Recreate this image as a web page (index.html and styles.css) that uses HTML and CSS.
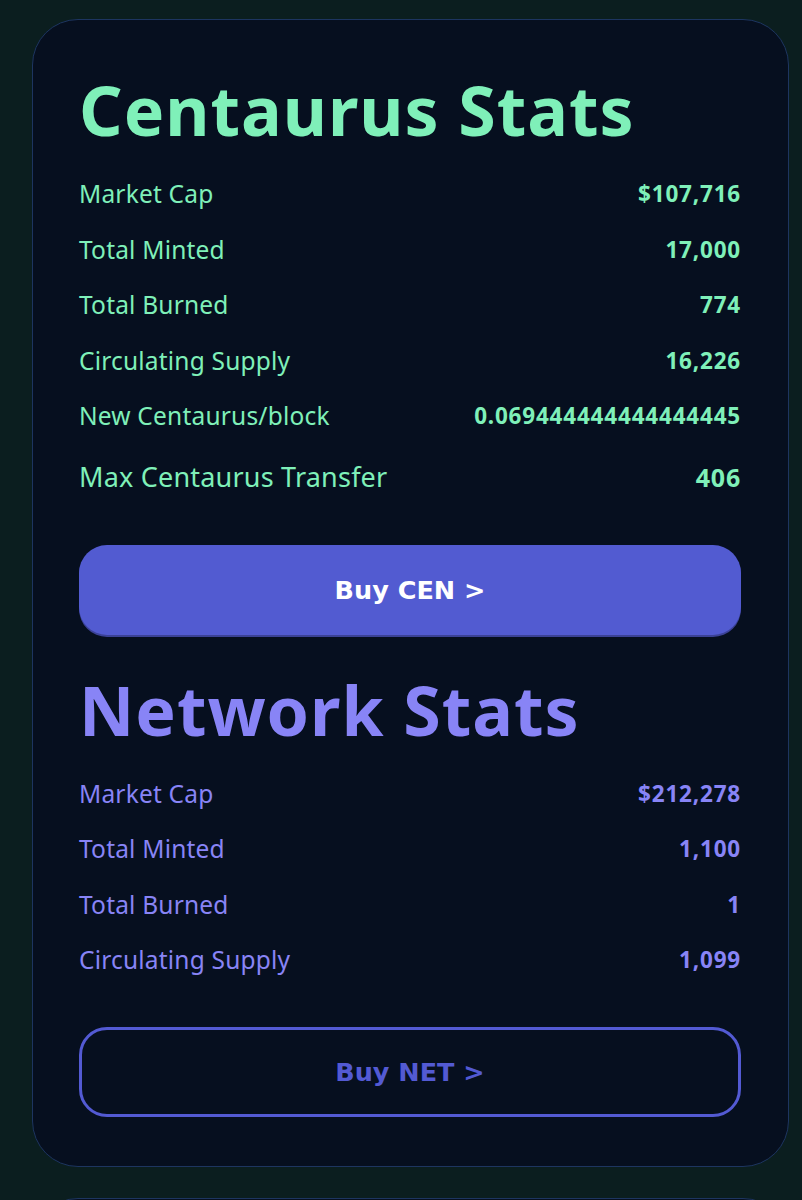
FILE: index.html
```html
<!DOCTYPE html>
<html lang="en">
<head>
<meta charset="utf-8">
<title>Centaurus Stats</title>
<link rel="stylesheet" href="styles.css">
</head>
<body>
<main class="page">
  <section class="card">
    <h2 class="title title-green">Centaurus Stats</h2>
    <div class="stats green">
      <div class="row"><span class="label">Market Cap</span><span class="value">$107,716</span></div>
      <div class="row"><span class="label">Total Minted</span><span class="value">17,000</span></div>
      <div class="row"><span class="label">Total Burned</span><span class="value">774</span></div>
      <div class="row"><span class="label">Circulating Supply</span><span class="value">16,226</span></div>
      <div class="row"><span class="label">New Centaurus/block</span><span class="value">0.069444444444444445</span></div>
      <div class="row row-big"><span class="label">Max Centaurus Transfer</span><span class="value">406</span></div>
    </div>
    <a class="btn btn-solid" href="#">Buy CEN &gt;</a>

    <h2 class="title title-purple">Network Stats</h2>
    <div class="stats purple">
      <div class="row"><span class="label">Market Cap</span><span class="value">$212,278</span></div>
      <div class="row"><span class="label">Total Minted</span><span class="value">1,100</span></div>
      <div class="row"><span class="label">Total Burned</span><span class="value">1</span></div>
      <div class="row"><span class="label">Circulating Supply</span><span class="value">1,099</span></div>
    </div>
    <a class="btn btn-outline" href="#">Buy NET &gt;</a>
  </section>
  <section class="card card-next"></section>
</main>
</body>
</html>
```
FILE: styles.css
```css
* { box-sizing: border-box; }
html, body {
  margin: 0;
  padding: 0;
  background: #0b1e1f;
  height: 1200px;
  overflow: hidden;
}
.page {
  padding: 19px 13px 0 32px;
  display: flex;
  flex-direction: column;
  gap: 31px;
}
.card {
  background: #060f1f;
  border: 1.5px solid #1d3560;
  border-radius: 46px;
  padding: 56px 47px 49px 46px;
  display: flex;
  flex-direction: column;
}
.card-next {
  height: 200px;
  padding: 0;
}
.title {
  margin: 0;
  font-family: "Noto Sans", sans-serif;
  font-weight: 700;
  font-size: 68px;
  line-height: 68px;
  letter-spacing: 1px;
}
.title-green { color: #7ff0b9; }
.title-purple { color: #8884f6; margin-top: 41px; }
.stats {
  display: flex;
  flex-direction: column;
  margin-top: 22px;
  font-family: "Noto Sans", sans-serif;
  font-size: 24.5px;
}
.green { color: #7ff0b9; }
.purple { color: #8884f6; }
.row {
  height: 55.5px;
  display: flex;
  justify-content: space-between;
  align-items: center;
}
.row-big {
  height: 61px;
  padding-top: 5px;
  font-size: 27px;
}
.label { font-weight: 400; letter-spacing: 0.2px; }
.value { font-weight: 700; font-size: 22.5px; letter-spacing: 0.8px; }
.row-big .value { font-size: 25px; }
.btn {
  display: flex;
  align-items: center;
  justify-content: center;
  height: 90px;
  border-radius: 28px;
  font-family: "DejaVu Sans", sans-serif;
  font-weight: 700;
  font-size: 25.5px;
  text-decoration: none;
}
.btn-solid {
  margin-top: 40px;
  background: #525bd1;
  color: #ffffff;
  box-shadow: 0 2px 0 #3b4296;
}
.btn-outline {
  margin-top: 39px;
  border: 3px solid #535ad3;
  color: #535ad3;
  background: transparent;
}
```
